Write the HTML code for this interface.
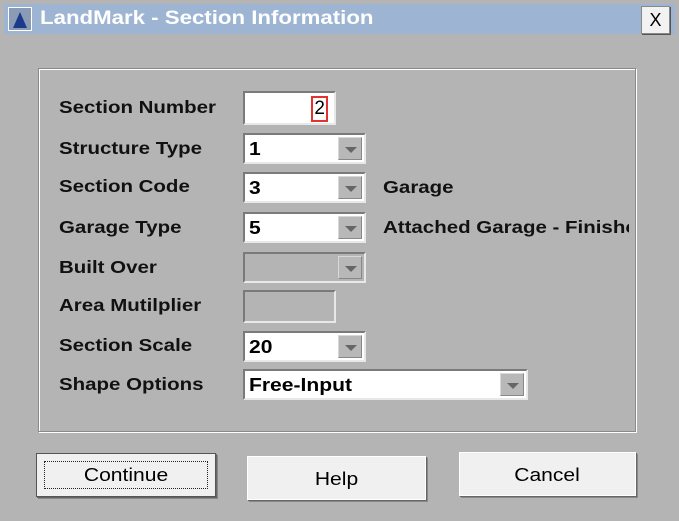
<!DOCTYPE html>
<html><head><style>
body{margin:0;width:679px;height:521px;background:#b4b4b4;font-family:"Liberation Sans",sans-serif;position:relative;overflow:hidden}
.a{position:absolute}
.s{display:inline-block;transform:scaleX(1.17);transform-origin:0 50%;white-space:nowrap}
.tb{left:4px;top:4px;width:671px;height:30px;background:#9db5d3}
.tt{left:40px;top:8px;color:#fff;font-size:19px;font-weight:bold}
.x{left:641px;top:6px;width:27px;height:26px;background:#f2f2f2;border:1px solid #888;box-shadow:1px 1px 0 #555;font-size:18px;text-align:center;line-height:26px}
.gb{left:38px;top:68px;width:596px;height:362px;border:1px solid #8a8a8a;box-shadow:inset 1px 1px 0 #fff,1px 1px 0 #fff}
.l{left:59px;font-size:17.5px;font-weight:bold;color:#111}
.in{background:#fff;border:2px solid #7a7a7a;border-right-color:#e8e8e8;border-bottom-color:#e8e8e8;box-sizing:border-box;font-size:18px;font-weight:bold;padding-left:4px;line-height:28px}
.dis{background:#b4b4b4}
.dd{position:absolute;right:2px;top:2px;width:24px;height:23px;background:#b8b8b8;border:1px solid #d8d8d8;border-right-color:#888;border-bottom-color:#888;box-sizing:border-box}
.dd:after{content:"";position:absolute;left:6px;top:9px;border-left:6px solid transparent;border-right:6px solid transparent;border-top:6px solid #666}
.t{font-size:17.5px;font-weight:bold;color:#111}
.b{background:#f0f0f0;border:1px solid #fff;box-shadow:1px 1px 0 #666,2px 2px 0 #888;font-size:18px;text-align:center;box-sizing:border-box}
.b .s{transform-origin:50% 50%}
</style></head><body>
<div class="a tb"></div>
<div class="a" style="left:8px;top:7px;width:22px;height:22px;background:#8a9bb5;border:1px solid #fff"><div style="position:absolute;left:4px;bottom:2px;width:0;height:0;border-left:7px solid transparent;border-right:7px solid transparent;border-bottom:16px solid #1b3a8a"></div></div>
<div class="a tt"><span class="s">LandMark - Section Information</span></div>
<div class="a x">X</div>
<div class="a gb"></div>
<div class="a l" style="top:97px"><span class="s">Section Number</span></div>
<div class="a l" style="top:138px"><span class="s">Structure Type</span></div>
<div class="a l" style="top:176px"><span class="s">Section Code</span></div>
<div class="a l" style="top:217px"><span class="s">Garage Type</span></div>
<div class="a l" style="top:257px"><span class="s">Built Over</span></div>
<div class="a l" style="top:295px"><span class="s">Area Mutilplier</span></div>
<div class="a l" style="top:335px"><span class="s">Section Scale</span></div>
<div class="a l" style="top:374px"><span class="s">Shape Options</span></div>
<div class="a in" style="left:243px;top:91px;width:93px;height:34px"><span style="position:absolute;right:6px;top:3px;border:2px solid #e53030;line-height:22px;padding:0 1px;font-weight:normal;font-size:19px">2</span></div>
<div class="a in" style="left:243px;top:133px;width:123px;height:31px"><span class="s">1</span><div class="dd"></div></div>
<div class="a in" style="left:243px;top:172px;width:123px;height:31px"><span class="s">3</span><div class="dd"></div></div>
<div class="a t" style="left:383px;top:177px"><span class="s">Garage</span></div>
<div class="a t" style="left:383px;top:217px;width:246px;overflow:hidden;height:22px"><span class="s">Attached Garage - Finished</span></div>
<div class="a in" style="left:243px;top:212px;width:123px;height:31px"><span class="s">5</span><div class="dd"></div></div>
<div class="a in dis" style="left:243px;top:252px;width:123px;height:31px"><div class="dd"></div></div>
<div class="a in dis" style="left:243px;top:290px;width:93px;height:33px"></div>
<div class="a in" style="left:243px;top:331px;width:123px;height:31px"><span class="s">20</span><div class="dd"></div></div>
<div class="a in" style="left:243px;top:369px;width:285px;height:31px"><span class="s">Free-Input</span><div class="dd"></div></div>
<div class="a b" style="left:36px;top:453px;width:180px;height:44px;line-height:42px;border:1px solid #555"><div style="position:absolute;left:7px;top:7px;right:7px;bottom:7px;border:1px dotted #222"></div><span class="s">Continue</span></div>
<div class="a b" style="left:247px;top:456px;width:179px;height:44px;line-height:44px"><span class="s">Help</span></div>
<div class="a b" style="left:459px;top:452px;width:177px;height:44px;line-height:44px"><span class="s">Cancel</span></div>
</body></html>
